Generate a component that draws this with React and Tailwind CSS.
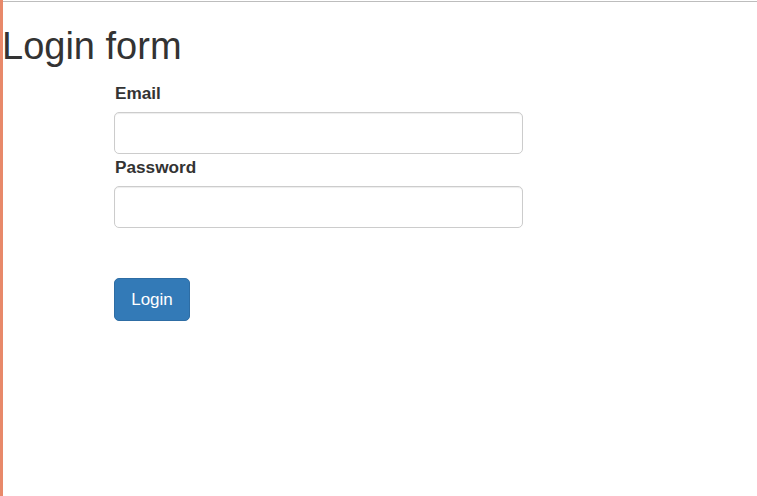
import React from "react";

const FIELDS = [
  { id: "email", label: "Email", type: "email" },
  { id: "password", label: "Password", type: "password" },
];

const App = () => (
  <div className="min-h-[496px] bg-white flex font-['Liberation_Sans',Arial,sans-serif] text-[#333]">
    {/* left accent bar */}
    <div className="w-[3px] shrink-0 bg-[#e8896a]" />

    <div className="flex-1 border-t border-[#bdbdbd] mt-px">
      <h1 className="mt-[24px] ml-[-1px] text-[38px] leading-[1.1] font-normal">Login form</h1>

      <form className="mt-[13px] ml-[111px] w-[409px]" onSubmit={(e) => e.preventDefault()}>
        {FIELDS.map((f) => (
          <div key={f.id} className="mb-px">
            <label htmlFor={f.id} className="block text-[17.2px] leading-[24px] font-bold mb-[7px] pl-px">
              {f.label}
            </label>
            <input
              id={f.id}
              type={f.type}
              className="block w-full h-[42px] px-3 text-[16.8px] border border-[#ccc] rounded-[5px] shadow-[inset_0_1px_1px_rgba(0,0,0,0.075)] outline-none"
            />
          </div>
        ))}

        <button
          type="submit"
          className="mt-[49px] w-[76px] h-[43px] rounded-[5px] bg-[#337ab7] border border-[#2e6da4] text-white text-[17px] leading-none"
        >
          Login
        </button>
      </form>
    </div>
  </div>
);

export default App;
